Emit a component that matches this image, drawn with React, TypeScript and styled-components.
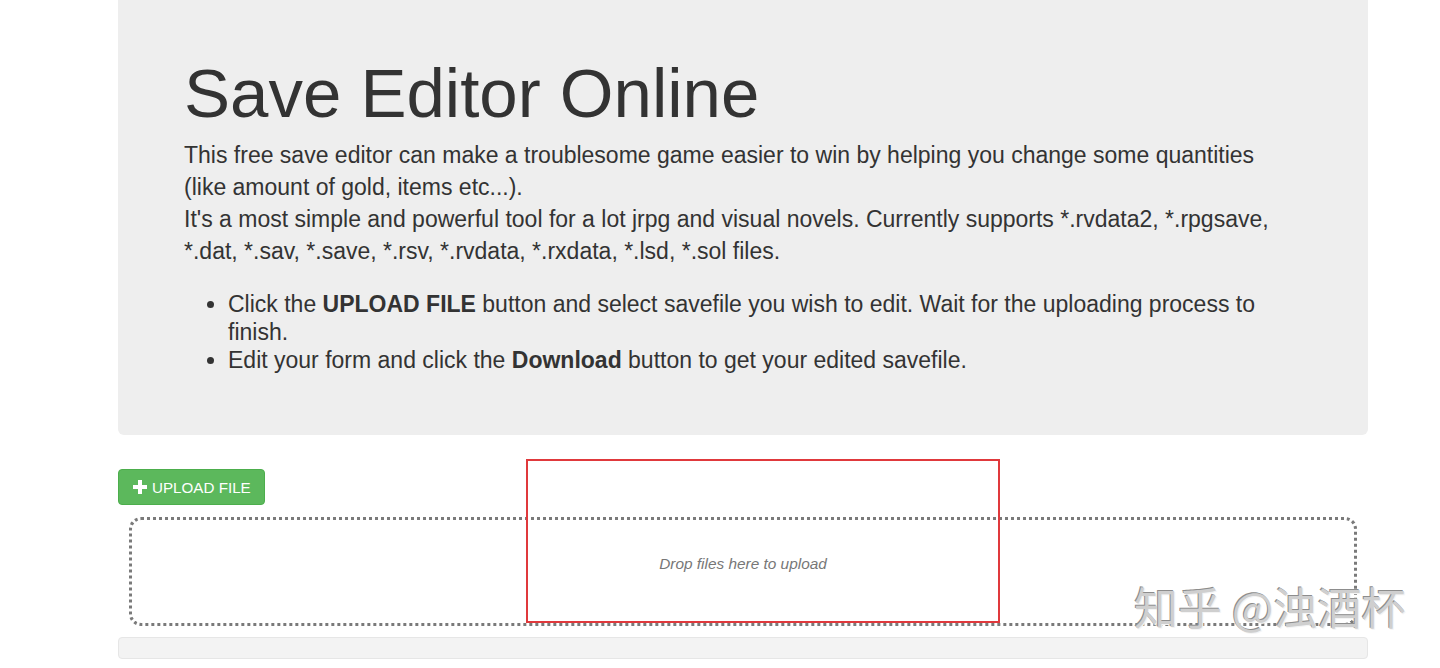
import React from 'react';
import styled, { createGlobalStyle } from 'styled-components';

const GlobalStyle = createGlobalStyle`
  html, body {
    margin: 0;
    padding: 0;
    background: #fff;
  }
  body {
    font-family: "Liberation Sans", Arial, Helvetica, sans-serif;
    color: #333;
    overflow: hidden;
  }
`;

const Page = styled.div`
  position: relative;
  width: 1440px;
  height: 668px;
  overflow: hidden;
`;

const Container = styled.div`
  width: 1250px;
  margin-left: 118px;
  display: flex;
  flex-direction: column;
`;

const Jumbotron = styled.section`
  background: #eee;
  border-radius: 0 0 6px 6px;
  padding: 56px 66px 61px 66px;
`;

const Title = styled.h1`
  margin: 0;
  font-size: 69px;
  line-height: 76px;
  font-weight: 400;
  color: #333;
`;

const Lead = styled.p`
  margin: 7px 0 0 0;
  font-size: 23px;
  line-height: 32px;
  color: #333;
`;

const Steps = styled.ul`
  margin: 23px 0 0 0;
  padding-left: 44px;
  font-size: 23px;
  line-height: 28px;
  color: #333;
`;

const UploadButton = styled.button`
  align-self: flex-start;
  margin-top: 34px;
  height: 36px;
  padding: 0 13px 0 14px;
  display: flex;
  align-items: center;
  gap: 5px;
  background: #5cb85c;
  border: 1px solid #4cae4c;
  border-radius: 4px;
  color: #fff;
  font-family: "Liberation Sans", Arial, sans-serif;
  font-size: 15.2px;
  text-transform: uppercase;
  cursor: pointer;
`;

const DropZone = styled.div`
  margin: 12px 11px 0 11px;
  height: 103px;
  box-sizing: content-box;
  border: 3px dotted #7a7a7a;
  border-radius: 12px;
  display: flex;
  align-items: center;
  justify-content: center;
  padding-bottom: 0;
  font-size: 15.4px;
  font-style: italic;
  color: #777;
`;

const DropHint = styled.span`
  margin-bottom: 16px;
`;

const Well = styled.div`
  margin-top: 11px;
  height: 20px;
  background: #f3f3f3;
  border: 1px solid #e6e6e6;
  border-radius: 4px;
`;

const Highlight = styled.div`
  position: absolute;
  left: 526px;
  top: 459px;
  width: 470px;
  height: 160px;
  border: 2px solid #e0393c;
  pointer-events: none;
`;

const Watermark = styled.div`
  position: absolute;
  left: 1134px;
  top: 579px;
  font-family: "Noto Sans CJK SC", sans-serif;
  font-size: 44px;
  line-height: 55px;
  color: #cfcfcf;
  text-shadow: -1px -1px 0 #8d8d8d, 1px 1px 0 #f4f4f4;
  white-space: nowrap;
  pointer-events: none;
`;

const PlusIcon = () => (
  <svg width="14" height="14" viewBox="0 0 14 14" aria-hidden="true">
    <path d="M5 0h4v5h5v4H9v5H5V9H0V5h5z" fill="#fff" />
  </svg>
);

const App: React.FC = () => {
  return (
    <Page>
      <GlobalStyle />
      <Container>
        <Jumbotron>
          <Title>Save Editor Online</Title>
          <Lead>
            This free save editor can make a troublesome game easier to win by helping you change some quantities
            (like amount of gold, items etc...).
            <br />
            It's a most simple and powerful tool for a lot jrpg and visual novels. Currently supports *.rvdata2, *.rpgsave,
            *.dat, *.sav, *.save, *.rsv, *.rvdata, *.rxdata, *.lsd, *.sol files.
          </Lead>
          <Steps>
            <li>
              Click the <b>UPLOAD FILE</b> button and select savefile you wish to edit. Wait for the uploading process to finish.
            </li>
            <li>
              Edit your form and click the <b>Download</b> button to get your edited savefile.
            </li>
          </Steps>
        </Jumbotron>

        <UploadButton>
          <PlusIcon />
          Upload file
        </UploadButton>

        <DropZone>
          <DropHint>Drop files here to upload</DropHint>
        </DropZone>

        <Well />
      </Container>

      <Highlight />
      <Watermark>知乎 @浊酒杯</Watermark>
    </Page>
  );
};

export default App;
